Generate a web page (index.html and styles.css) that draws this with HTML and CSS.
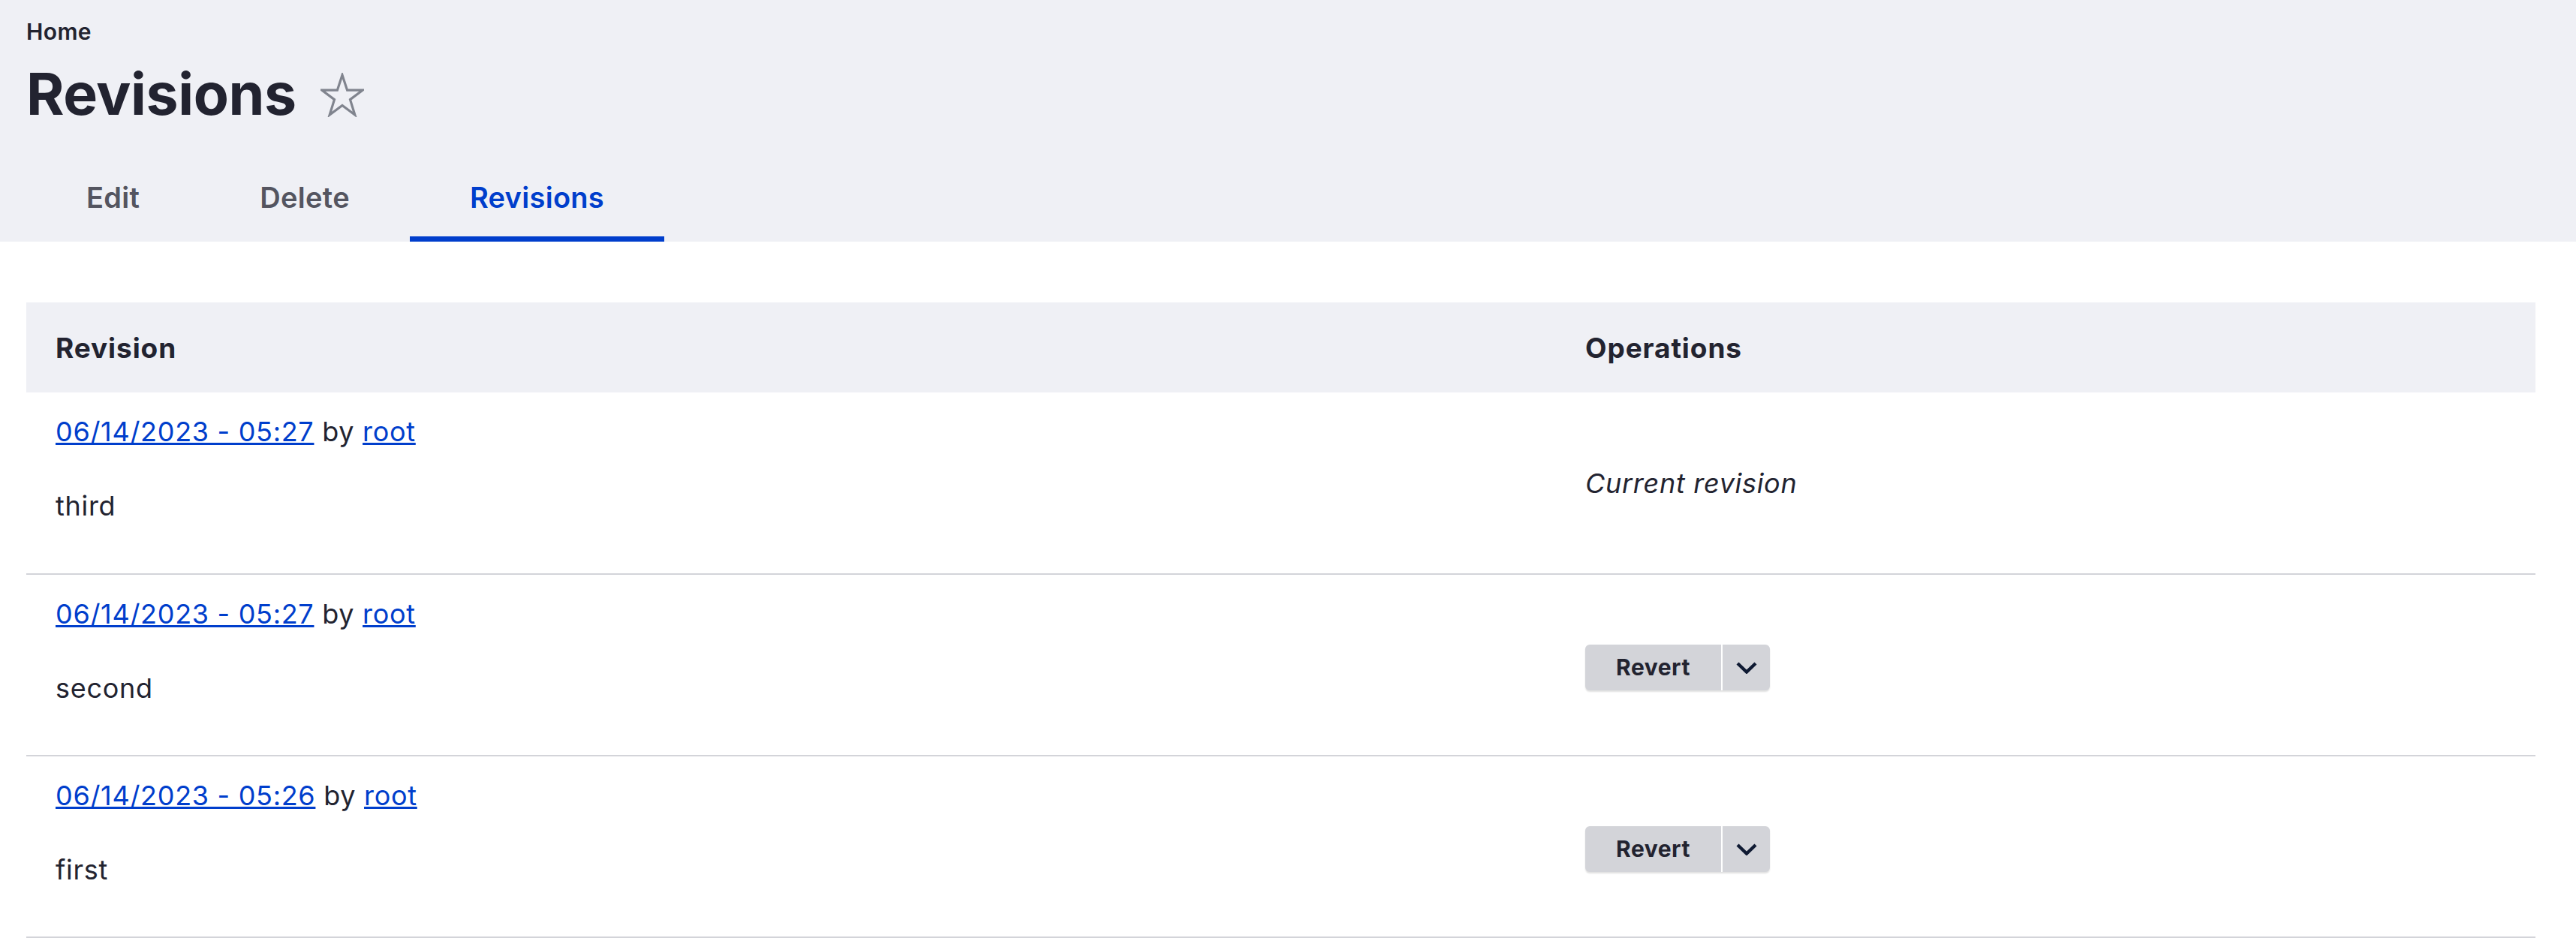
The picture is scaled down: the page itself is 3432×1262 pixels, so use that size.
FILE: index.html
```html
<!DOCTYPE html>
<html lang="en">
<head>
<meta charset="utf-8">
<title>Revisions</title>
<link rel="stylesheet" href="styles.css">
</head>
<body>
<header class="page-header">
  <nav class="breadcrumb"><a href="#">Home</a></nav>
  <div class="title-row">
    <h1 class="page-title">Revisions</h1>
    <svg class="star" viewBox="0 0 58 59" width="58" height="59" aria-hidden="true">
      <polygon points="29,3 35.6,23.2 56,23.2 39.5,35.6 45.8,56 29,43.4 12.2,56 18.5,35.6 2,23.2 22.4,23.2" fill="none" stroke="#80848e" stroke-width="3.2" stroke-linejoin="miter"/>
    </svg>
  </div>
  <ul class="tabs">
    <li class="tab"><a href="#">Edit</a></li>
    <li class="tab"><a href="#">Delete</a></li>
    <li class="tab is-active"><a href="#">Revisions</a></li>
  </ul>
</header>
<main class="content">
  <table class="rev-table">
    <thead>
      <tr><th class="col-rev">Revision</th><th class="col-ops">Operations</th></tr>
    </thead>
    <tbody>
      <tr>
        <td class="col-rev"><div class="meta"><a href="#">06/14/2023 - 05:27</a> by <a href="#">root</a></div><p class="log">third</p></td>
        <td class="col-ops"><em class="current">Current revision</em></td>
      </tr>
      <tr>
        <td class="col-rev"><div class="meta"><a href="#">06/14/2023 - 05:27</a> by <a href="#">root</a></div><p class="log">second</p></td>
        <td class="col-ops"><div class="dropbutton"><a class="db-main" href="#">Revert</a><span class="db-toggle"><svg viewBox="0 0 28 16" width="28" height="16" aria-hidden="true"><polyline points="2,2 14,13.5 26,2" fill="none" stroke="#0f1a33" stroke-width="4.4"/></svg></span></div></td>
      </tr>
      <tr>
        <td class="col-rev"><div class="meta"><a href="#">06/14/2023 - 05:26</a> by <a href="#">root</a></div><p class="log">first</p></td>
        <td class="col-ops"><div class="dropbutton"><a class="db-main" href="#">Revert</a><span class="db-toggle"><svg viewBox="0 0 28 16" width="28" height="16" aria-hidden="true"><polyline points="2,2 14,13.5 26,2" fill="none" stroke="#0f1a33" stroke-width="4.4"/></svg></span></div></td>
      </tr>
    </tbody>
  </table>
</main>
</body>
</html>
```
FILE: styles.css
```css
html, body {
  margin: 0;
  padding: 0;
}
body {
  font-family: Inter, "Liberation Sans", Arial, sans-serif;
  color: #222330;
  background: #ffffff;
  font-size: 36px;
  letter-spacing: 0.7px;
}
a {
  color: #003ecc;
}
.page-header {
  background: #eff0f5;
  padding: 21px 54px 0 35px;
}
.breadcrumb a {
  display: block;
  color: #222330;
  text-decoration: none;
  font-weight: 600;
  font-size: 30px;
  letter-spacing: 0.4px;
  line-height: 42px;
  height: 42px;
}
.title-row {
  display: flex;
  align-items: center;
  gap: 32px;
  height: 90px;
  margin-top: 17px;
}
.page-title {
  margin: 0;
  font-size: 77px;
  font-weight: 700;
  letter-spacing: -0.4px;
  line-height: 90px;
}
.star {
  display: block;
  margin-top: 2px;
}
.tabs {
  list-style: none;
  margin: 46px 0 0 0;
  padding: 0;
  display: flex;
  height: 106px;
}
.tab a {
  display: flex;
  align-items: center;
  height: 106px;
  box-sizing: border-box;
  padding: 0 80px 5px;
  border-bottom: 7px solid transparent;
  font-weight: 600;
  font-size: 38px;
  letter-spacing: 0.3px;
  color: #545560;
  text-decoration: none;
}
.tab.is-active a {
  color: #003ecc;
  border-bottom-color: #003ecc;
}
.content {
  padding: 81px 54px 0 35px;
}
.rev-table {
  width: 100%;
  border-collapse: collapse;
}
.rev-table th {
  background: #eff0f5;
  text-align: left;
  font-weight: 700;
  font-size: 37px;
  letter-spacing: 0.9px;
  height: 120px;
  padding: 0 39px;
  box-sizing: border-box;
}
.col-rev {
  width: 2038px;
  box-sizing: border-box;
}
.rev-table td {
  border-bottom: 2px solid #d3d4d9;
  padding: 0 39px;
  vertical-align: middle;
  height: 242px;
  box-sizing: border-box;
}
.rev-table td.col-rev {
  vertical-align: top;
  padding-top: 26px;
}
.meta {
  line-height: 53px;
}
.log {
  margin: 46px 0 0 0;
  line-height: 53px;
}
.current {
  font-style: italic;
}
.dropbutton {
  display: inline-flex;
  height: 61px;
  border-radius: 6px;
  background: #d3d4d9;
  box-shadow: 0 2px 2px rgba(0, 0, 0, 0.12);
  margin-top: 6px;
}
.db-main {
  display: flex;
  align-items: center;
  justify-content: center;
  width: 181px;
  color: #222330;
  font-weight: 700;
  font-size: 30px;
  letter-spacing: 0.5px;
  text-decoration: none;
  border-right: 2px solid #ffffff;
}
.db-toggle {
  display: flex;
  align-items: center;
  justify-content: center;
  width: 63px;
}
.db-toggle svg {
  display: block;
  margin-top: 1px;
}
```
